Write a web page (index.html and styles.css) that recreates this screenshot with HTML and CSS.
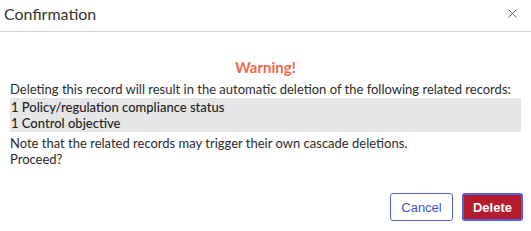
FILE: index.html
```html
<!DOCTYPE html>
<html>
<head>
<meta charset="utf-8">
<link rel="stylesheet" href="styles.css">
</head>
<body>
<div class="dialog">
  <div class="header">
    <span class="title">Confirmation</span>
    <button class="close" aria-label="Close">
      <svg width="9" height="9" viewBox="0 0 9 9"><path d="M0.5 0.5 L8.5 8.5 M8.5 0.5 L0.5 8.5" stroke="#6b6b6b" stroke-width="1" fill="none"/></svg>
    </button>
  </div>
  <div class="content">
    <div class="warning">Warning!</div>
    <p class="line">Deleting this record will result in the automatic deletion of the following related records:</p>
    <div class="related">
      <div class="line">1 Policy/regulation compliance status</div>
      <div class="line">1 Control objective</div>
    </div>
    <p class="line">Note that the related records may trigger their own cascade deletions.</p>
    <p class="line">Proceed?</p>
  </div>
  <div class="footer">
    <button class="btn cancel">Cancel</button>
    <button class="btn delete">Delete</button>
  </div>
</div>
</body>
</html>
```

FILE: styles.css
```css
html, body {
  margin: 0;
  padding: 0;
  background: #ffffff;
}
body {
  font-family: Lato, "Noto Sans", sans-serif;
  color: #2b2b2b;
}
.dialog {
  height: 231px;
  display: flex;
  flex-direction: column;
  box-sizing: border-box;
}
.header {
  height: 31px;
  border-bottom: 1px solid #d3d3d8;
  display: flex;
  align-items: center;
  justify-content: space-between;
  padding: 0 14px 0 4px;
}
.title {
  font-size: 16px;
  color: #333333;
  padding-bottom: 4px;
}
.close {
  border: 0;
  background: none;
  padding: 0;
  width: 9px;
  height: 9px;
  display: flex;
  margin-bottom: 4px;
}
.content {
  padding: 0 10px;
  font-size: 13px;
  line-height: 16px;
}
.warning {
  margin-top: 26px;
  text-align: center;
  color: #f3674b;
  font-weight: 700;
  font-size: 15px;
  line-height: 18px;
  margin-bottom: 5px;
}
.line {
  margin: 0;
}
.related {
  background: #e6e6e9;
  margin: 1px 0 3px;
  padding: 1px 0 1px 1px;
  font-weight: 500;
  color: #222;
}
.footer {
  margin-top: auto;
  display: flex;
  justify-content: flex-end;
  gap: 9px;
  padding: 0 8px 10px 0;
}
.btn {
  height: 28px;
  box-sizing: border-box;
  border-radius: 3px;
  font-family: "Liberation Sans", Arial, sans-serif;
  font-size: 13px;
  padding: 0;
}
.cancel {
  width: 63px;
  background: #ffffff;
  border: 1px solid #5a61d4;
  color: #4b53c1;
}
.delete {
  width: 61px;
  background: #b61b2d;
  border: 2px solid #4d62dc;
  color: #ffffff;
  font-weight: 700;
}
```
